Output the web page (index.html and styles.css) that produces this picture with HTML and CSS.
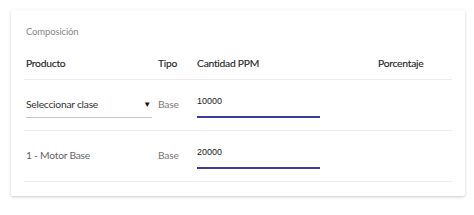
FILE: index.html
```html
<!DOCTYPE html>
<html lang="es">
<head>
    <meta charset="UTF-8">
    <meta name="viewport" content="width=device-width, initial-scale=1.0">
    <title>Composición</title>
    <link rel="stylesheet" href="styles.css">
</head>
<body>
<div class="card">
    <div class="card-title">Composición</div>
    <div class="row head">
        <div class="cell">Producto</div>
        <div class="cell">Tipo</div>
        <div class="cell">Cantidad PPM</div>
        <div class="cell">Porcentaje</div>
    </div>
    <div class="row">
        <div class="cell">
            <div class="select">
                <span>Seleccionar clase</span>
                <span class="arrow">&#9660;</span>
            </div>
        </div>
        <div class="cell muted">Base</div>
        <div class="cell input-cell"><input type="text" value="10000"></div>
        <div class="cell"></div>
    </div>
    <div class="row">
        <div class="cell">1 - Motor Base</div>
        <div class="cell muted">Base</div>
        <div class="cell input-cell"><input type="text" value="20000"></div>
        <div class="cell"></div>
    </div>
</div>
</body>
</html>
```

FILE: styles.css
```css
body {
    margin: 0;
    padding: 0 0 18px;
    background: #fff;
    font-family: Lato, "Noto Sans", sans-serif;
}
.card {
    margin: 10px 0 0 11px;
    width: 454px;
    box-sizing: border-box;
    padding: 15px 13px 14px;
    background: white;
    box-shadow: 0 1px 3px rgba(0, 0, 0, 0.22);
    border-radius: 2px;
}
.card-title {
    font-size: 9.5px;
    line-height: 14px;
    letter-spacing: -0.15px;
    color: #888;
    padding-left: 2px;
}
.row {
    display: grid;
    grid-template-columns: 132px 39px 181px 1fr;
    height: 50px;
    border-bottom: 1px solid #ececec;
    font-size: 10.3px;
    line-height: 14px;
    letter-spacing: -0.25px;
    color: #666;
}
.row.head {
    height: 40px;
    color: #2a2a2a;
    -webkit-text-stroke: 0.15px #2a2a2a;
}
.row.head .cell {
    padding-top: 17px;
}
.cell {
    padding: 17px 2px 0;
}
.muted {
    color: #7a7a7a;
}
.select {
    display: flex;
    justify-content: space-between;
    width: 126px;
    border-bottom: 1px solid #c4c4c4;
    padding-bottom: 6px;
    color: #333;
}
.arrow {
    font-size: 8px;
    color: #111;
    padding-right: 1px;
}
.input-cell {
    padding-top: 15px;
}
.input-cell input {
    display: block;
    width: 123px;
    box-sizing: border-box;
    border: none;
    border-bottom: 2px solid #3b3b9b;
    padding: 0 0 9px;
    margin: 0;
    font-family: "Liberation Sans", Arial, sans-serif;
    font-size: 9px;
    line-height: 12px;
    color: #222;
    outline: none;
}
```
